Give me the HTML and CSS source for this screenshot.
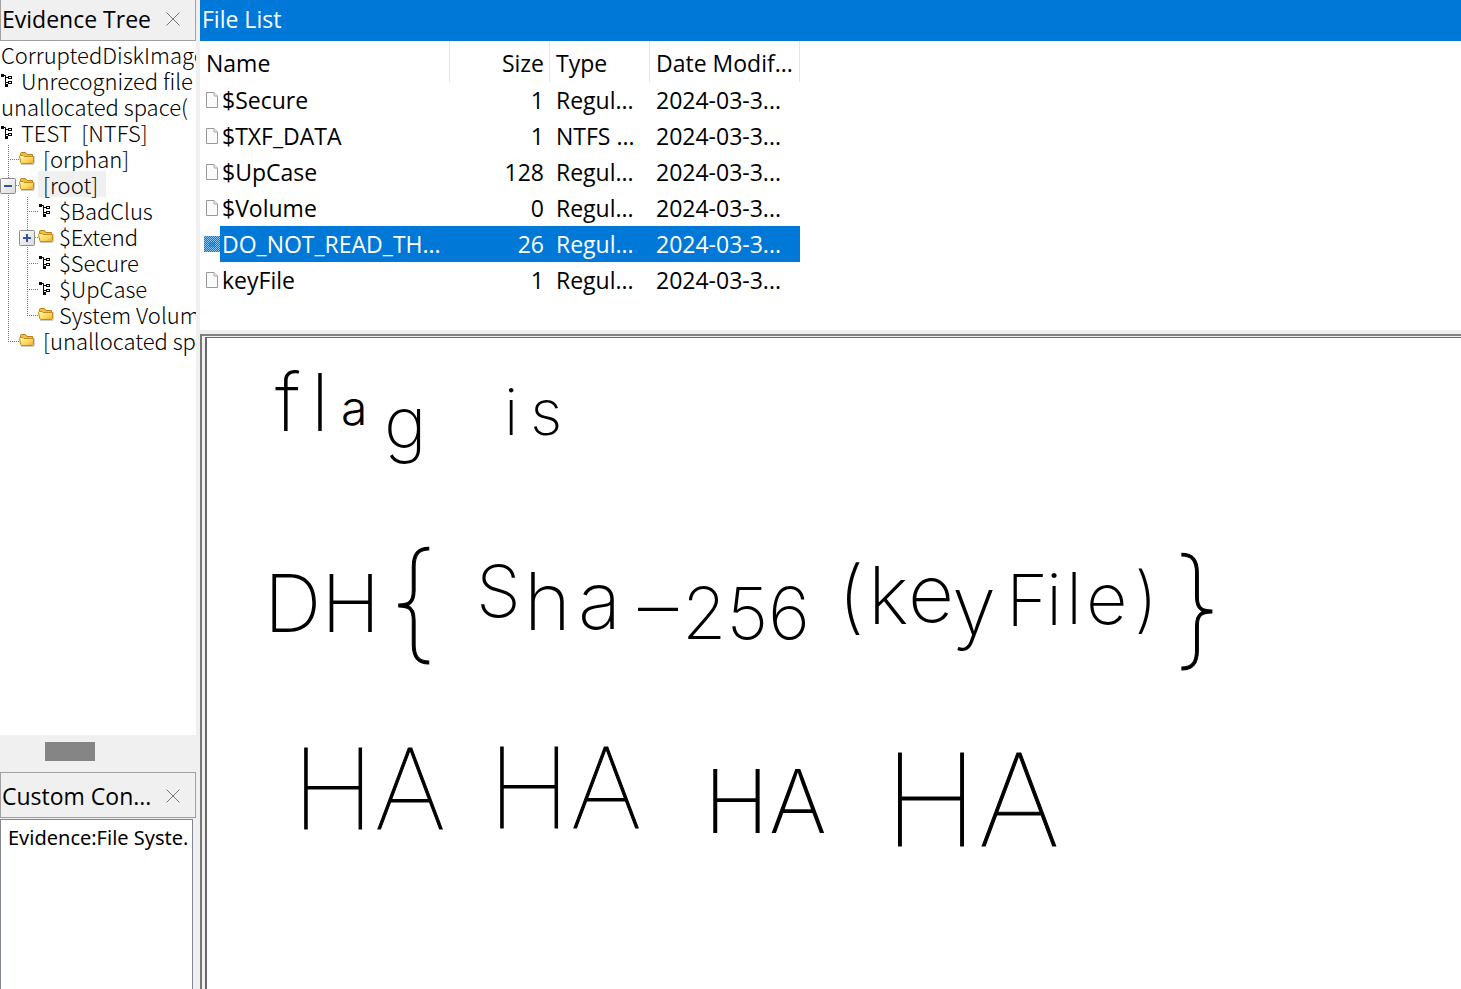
FILE: index.html
```html
<!DOCTYPE html>
<html lang="en">
<head>
<meta charset="utf-8">
<title>Evidence Viewer</title>
<link rel="stylesheet" href="styles.css">
</head>
<body>
<svg class="defs" aria-hidden="true">
  <defs>
    <linearGradient id="gold" x1="0" y1="0" x2="1" y2="1"><stop offset="0" stop-color="#fff6ae"/><stop offset="0.6" stop-color="#fbd75b"/><stop offset="1" stop-color="#e9a92a"/></linearGradient>
    <linearGradient id="knob" x1="0" y1="0" x2="1" y2="1"><stop offset="0" stop-color="#fff"/><stop offset="1" stop-color="#d9d9d9"/></linearGradient>
    <symbol id="folder" viewBox="0 0 16 16"><path d="M2 14.500h13M15.300 6v8" stroke="#ccc" fill="none"/><path d="M1.500 12V3.500Q1.500 2.500 2.500 2.500H6.500L8 4.500H13.500V12.500" fill="#eebf45" stroke="#b87d14"/><path d="M.5 6.500Q.5 5.500 1.500 5.500H4L5 6.500H14.500V12.500Q14.500 13.500 13.500 13.500H3Q2 13.500 1.700 12.500Z" fill="url(#gold)" stroke="#c58b19"/></symbol>
    <symbol id="node" viewBox="0 0 16 16"><path d="M1 2h3v3H1zM5 12h3v3H5zM8 4h4v3H8zM8 9h4v3H8z"/><path d="M2 3.500h3.500V13.500M5.500 5.500H9M5.500 10.500H9" fill="none" stroke="#000"/><path d="M9 5h2v1H9zM9 10h2v1H9z" fill="#fff"/></symbol>
    <symbol id="tee" viewBox="0 0 19 26"><path class="dots" d="M8.500 0v26M10 14.500h9"/></symbol>
    <symbol id="ell" viewBox="0 0 19 26"><path class="dots" d="M8.500 0v15M10 14.500h9"/></symbol>
    <symbol id="bar" viewBox="0 0 19 26"><path class="dots" d="M8.500 0v26"/></symbol>
    <symbol id="knobbox" viewBox="0 0 16 16"><rect x=".5" y=".5" width="15" height="15" rx="1" fill="url(#knob)" stroke="#8c8c8c"/></symbol>
    <symbol id="page" viewBox="0 0 16 18"><path d="M2.500 1.500H10L13.500 5V16.500H2.500Z" fill="#fafafa" stroke="#999"/><path d="M10 1.500V5H13.500" fill="#eee" stroke="#aaa"/></symbol>
    <pattern id="check" width="2" height="2" patternUnits="userSpaceOnUse"><rect width="2" height="2" fill="#8cc4f0"/><path d="M0 0h1v1H0zM1 1h1v1H1z" fill="#0078d7"/></pattern>
  </defs>
</svg>
<div class="app">
  <aside class="side">
    <section class="tree-panel">
      <header class="cap"><h2>Evidence Tree</h2><button class="close" aria-label="Close Evidence Tree"><svg viewBox="0 0 14 14"><path d="M.5.5l13 13M13.500.5l-13 13"/></svg></button></header>
      <ul class="tree">
        <li><span class="label flush">CorruptedDiskImage</span></li>
        <li><svg class="ico"><use href="#node"/></svg><span class="label">Unrecognized file</span></li>
        <li><span class="label flush">unallocated space(</span></li>
        <li><svg class="ico"><use href="#node"/></svg><span class="label">TEST&nbsp; [NTFS]</span></li>
        <li><svg class="gut"><use href="#tee"/></svg><svg class="ico"><use href="#folder"/></svg><span class="label wide">[orphan]</span></li>
        <li><svg class="gut"><use href="#tee"/><use href="#knobbox" x="0" y="7" width="16" height="16"/><path class="sign" d="M4 15h8"/></svg><svg class="ico"><use href="#folder"/></svg><span class="label current">[root]</span></li>
        <li><svg class="gut"><use href="#bar"/></svg><svg class="gut"><use href="#tee"/></svg><svg class="ico"><use href="#node"/></svg><span class="label">$BadClus</span></li>
        <li><svg class="gut"><use href="#bar"/></svg><svg class="gut"><use href="#tee"/><use href="#knobbox" x="0" y="7" width="16" height="16"/><path class="sign" d="M4 15h8M8 11v8"/></svg><svg class="ico"><use href="#folder"/></svg><span class="label">$Extend</span></li>
        <li><svg class="gut"><use href="#bar"/></svg><svg class="gut"><use href="#tee"/></svg><svg class="ico"><use href="#node"/></svg><span class="label">$Secure</span></li>
        <li><svg class="gut"><use href="#bar"/></svg><svg class="gut"><use href="#tee"/></svg><svg class="ico"><use href="#node"/></svg><span class="label">$UpCase</span></li>
        <li><svg class="gut"><use href="#bar"/></svg><svg class="gut"><use href="#ell"/></svg><svg class="ico"><use href="#folder"/></svg><span class="label">System Volum</span></li>
        <li><svg class="gut"><use href="#ell"/></svg><svg class="ico"><use href="#folder"/></svg><span class="label wide">[unallocated sp</span></li>
      </ul>
      <div class="scroll"><div class="thumb"></div></div>
    </section>
    <section class="custom-panel">
      <header class="cap boxed"><h2>Custom Con...</h2><button class="close" aria-label="Close Custom Content"><svg viewBox="0 0 14 14"><path d="M.5.5l13 13M13.500.5l-13 13"/></svg></button></header>
      <div class="sources">Evidence:File Syste.</div>
    </section>
  </aside>
  <main class="main">
    <section class="files">
      <h2 class="title">File List</h2>
      <table>
        <colgroup><col class="c-name"><col class="c-size"><col class="c-type"><col class="c-date"></colgroup>
        <thead><tr><th>Name</th><th class="num">Size</th><th>Type</th><th>Date Modif...</th></tr></thead>
        <tbody>
          <tr><td><div class="file"><svg><use href="#page"/></svg><span>$Secure</span></div></td><td class="num">1</td><td>Regul...</td><td>2024-03-3...</td></tr>
          <tr><td><div class="file"><svg><use href="#page"/></svg><span>$TXF_DATA</span></div></td><td class="num">1</td><td>NTFS ...</td><td>2024-03-3...</td></tr>
          <tr><td><div class="file"><svg><use href="#page"/></svg><span>$UpCase</span></div></td><td class="num">128</td><td>Regul...</td><td>2024-03-3...</td></tr>
          <tr><td><div class="file"><svg><use href="#page"/></svg><span>$Volume</span></div></td><td class="num">0</td><td>Regul...</td><td>2024-03-3...</td></tr>
          <tr class="sel"><td><div class="file"><svg viewBox="0 0 16 18"><rect y="1" width="16" height="16" fill="url(#check)"/><path d="M5 7h6v5H5z" fill="#0078d7" opacity=".5"/></svg><span>DO_NOT_READ_TH...</span></div></td><td class="num">26</td><td>Regul...</td><td>2024-03-3...</td></tr>
          <tr><td><div class="file"><svg><use href="#page"/></svg><span>keyFile</span></div></td><td class="num">1</td><td>Regul...</td><td>2024-03-3...</td></tr>
        </tbody>
      </table>
    </section>
    <section class="preview">
      <div class="canvas">
        <svg class="ink" width="1100" height="560" viewBox="207 338 1100 560">
          <text class="s80"><tspan x="275" y="431">f</tspan><tspan x="311" y="431">l</tspan><tspan class="s48" x="341" y="425">a</tspan><tspan class="s72" x="384" y="448">g</tspan></text>
          <text class="s64"><tspan x="504" y="435">i</tspan><tspan x="530" y="435">s</tspan></text>
          <text class="s80" x="264" y="632">DH</text>
          <text class="s128" x="388" y="646">{</text>
          <text class="s80"><tspan class="s72" x="476" y="617">S</tspan><tspan x="524" y="630">h</tspan><tspan x="578" y="629">a</tspan><tspan x="638" y="634">–</tspan></text>
          <text class="s72" x="682" y="639">256</text>
          <text class="s80"><tspan x="838" y="624">(</tspan><tspan x="868" y="624">k</tspan><tspan x="908" y="622">e</tspan><tspan x="952" y="634">y</tspan></text>
          <text class="s72"><tspan x="1006" y="626">F</tspan><tspan x="1046" y="625">i</tspan><tspan x="1066" y="624">l</tspan><tspan x="1086" y="624">e</tspan><tspan x="1134" y="624">)</tspan></text>
          <text class="s128" x="1172" y="652">}</text>
          <text class="s112" x="292" y="829">HA</text>
          <text class="s112" x="488" y="828">HA</text>
          <text class="s88" x="704" y="833">HA</text>
          <text class="s128" x="884" y="846">HA</text>
        </svg>
      </div>
    </section>
  </main>
</div>
</body>
</html>
```
FILE: styles.css
```css
* { box-sizing: border-box; }
body { margin: 0; background: #f0f0f0; color: #000; font-family: "Open Sans", "Noto Sans", sans-serif; font-size: 23px; }
h2 { margin: 0; font-size: inherit; font-weight: 400; }
.defs { position: absolute; width: 0; height: 0; }
.app { display: grid; grid-template-columns: 196px minmax(0, 1fr); gap: 4px; min-height: 100vh; }

.side { display: flex; flex-direction: column; gap: 3px; min-width: 0; }
.tree-panel { flex: 1; display: flex; flex-direction: column; }
.cap { display: flex; align-items: center; justify-content: space-between; height: 41px; padding: 0 15px 2px 1px; border: 1px solid #a0a0a0; border-top: 0; background: #f0f0f0; white-space: nowrap; }
.cap.boxed { height: 46px; padding-top: 3px; border-top: 1px solid #a0a0a0; }
.close { width: 14px; height: 14px; padding: 0; border: 0; background: none; }
.close svg { display: block; width: 14px; height: 14px; fill: none; stroke: #777; }
.tree { flex: 1; margin: 0; padding: 0; list-style: none; background: #fff; overflow: hidden; font-family: "Noto Sans CJK KR", "Noto Sans", sans-serif; font-weight: 300; font-size: 22px; }
.tree li { display: flex; align-items: center; height: 26px; white-space: nowrap; }
.tree svg { flex: none; }
.gut { width: 19px; height: 26px; }
.ico { width: 16px; height: 16px; }
.dots { fill: none; stroke: #777; stroke-dasharray: 1 1; }
.sign { fill: none; stroke: #3353a5; stroke-width: 2; }
.label { padding-left: 5px; line-height: 26px; }
.label.flush { padding-left: 1px; }
.label.wide { padding-left: 8px; }
.label.current { margin-left: 3px; padding: 0 8px 0 5px; background: #f0f0f0; }
.scroll { height: 34px; padding: 7px 0 0 45px; background: #f0f0f0; }
.thumb { width: 50px; height: 19px; background: #858585; }
.custom-panel { display: flex; flex-direction: column; gap: 1px; height: 217px; }
.sources { flex: 1; margin-right: 3px; padding: 4px 0 0 7px; border: 1px solid #828790; border-bottom: 0; background: #fff; overflow: hidden; white-space: nowrap; font-family: "Noto Sans", sans-serif; font-size: 20px; }

.main { display: flex; flex-direction: column; gap: 4px; min-width: 0; }
.files { height: 330px; background: #fff; }
.title { height: 41px; padding-left: 2px; line-height: 38px; background: #0078d7; color: #fff; }
table { width: 600px; table-layout: fixed; border-collapse: separate; border-spacing: 0; }
.c-name { width: 250px; }
.c-size, .c-type { width: 100px; }
.c-date { width: 150px; }
th, td { padding: 0 0 0 6px; text-align: left; font-weight: 400; white-space: nowrap; }
th { height: 41px; padding-top: 2px; border-right: 1px solid #e5e5e5; }
td { height: 36px; line-height: 36px; }
td:first-child { padding-left: 4px; }
.num { padding-right: 6px; text-align: right; }
th.num { padding-right: 5px; }
.file { display: flex; align-items: center; }
.file svg { flex: none; width: 16px; height: 18px; }
.file span { flex: 1; padding-left: 2px; }
.sel { color: #fff; }
.sel td + td, .sel .file span { background: #0078d7; }

.preview { flex: 1; display: flex; padding: 1px 0 0 3px; border-top: 2px solid #828282; border-left: 2px solid #777; }
.canvas { flex: 1; min-width: 0; border-top: 1px solid #696969; border-left: 2px solid #696969; background: #fff; overflow: hidden; }
.ink { display: block; font-family: Inter, Lato, Roboto, sans-serif; font-weight: 200; }
.s48 { font-size: 48px; font-weight: 300; }
.s64 { font-size: 64px; }
.s72 { font-size: 72px; }
.s80 { font-size: 80px; }
.s88 { font-size: 88px; }
.s112, .s128 { font-weight: 100; stroke: #000; stroke-width: 1px; }
.s112 { font-size: 112px; }
.s128 { font-size: 128px; }
```
